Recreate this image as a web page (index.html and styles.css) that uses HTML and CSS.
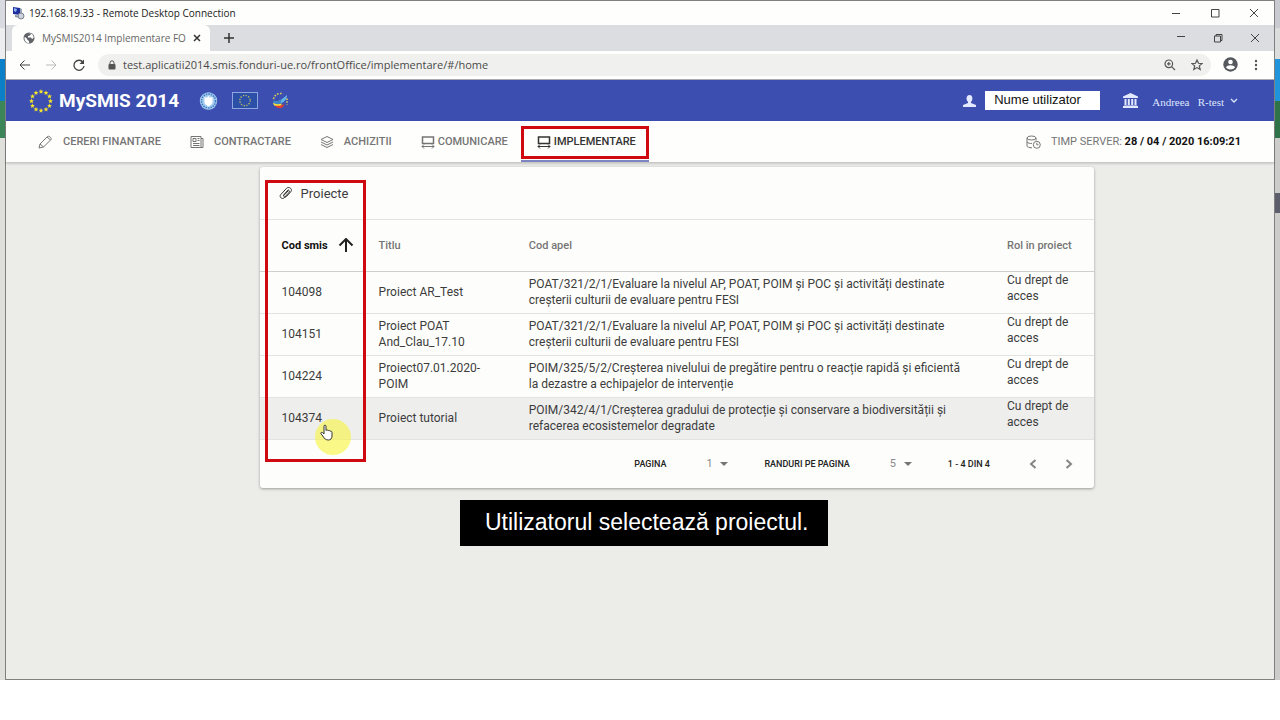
FILE: index.html
```html
<!DOCTYPE html>
<html lang="ro">
<head>
  <meta charset="UTF-8" />
  <meta name="viewport" content="width=device-width, initial-scale=1.0" />
  <title>MySMIS2014 Implementare FO</title>
  <link rel="stylesheet" href="styles.css">
</head>
<body>
  <div class="desktop">
    <div class="strip strip-left"></div>
    <div class="window">

      <!-- remote desktop title bar -->
      <div class="titlebar">
        <svg class="rdp-icon" width="13" height="14" viewBox="0 0 13 14">
          <path d="M1 1l7 1v7l-7-1z" fill="#1c2f9c"/>
          <path d="M2 2l3 1-1 3-2-1z" fill="#8fb4ee"/>
          <path d="M8 2l2 1v6l-2 0z" fill="#9aa3b5"/>
          <path d="M3 9l5 1v2l-5-1z" fill="#8a93a5"/>
          <circle cx="9" cy="10" r="3" fill="#cdd3dd" stroke="#79808c"/>
        </svg>
        <span class="titlebar-text">192.168.19.33 - Remote Desktop Connection</span>
        <div class="win-buttons">
          <button aria-label="Minimize"><svg width="10" height="10" viewBox="0 0 10 10"><path d="M1 5.500h8"/></svg></button>
          <button aria-label="Maximize"><svg width="10" height="10" viewBox="0 0 10 10"><path d="M1.500 1.500h7.500v7.500h-7.500z"/></svg></button>
          <button aria-label="Close"><svg width="10" height="10" viewBox="0 0 10 10"><path d="M1 1l8 8M9 1l-8 8"/></svg></button>
        </div>
      </div>

      <!-- browser tabs -->
      <div class="tabbar">
        <div class="tab">
          <svg width="12" height="12" viewBox="0 0 12 12">
            <circle cx="6" cy="6" r="5.500" fill="#5f6368"/>
            <path d="M1.500 5l2 1 1 2 1.500 1v2C3.500 11 1.200 9 1.500 5zM5 1.500l3 .5-1 1.500-2 .5v1.500l3 0 1 1.500 1.500-1C11 3 9 1 5 1.500z" fill="#fff"/>
          </svg>
          <span class="tab-title">MySMIS2014 Implementare FO</span>
          <button aria-label="Close tab"><svg width="8" height="8" viewBox="0 0 8 8"><path d="M1 1l6 6M7 1l-6 6" stroke="#333" stroke-width="1.500"/></svg></button>
        </div>
        <button class="new-tab" aria-label="New tab"><svg width="10" height="10" viewBox="0 0 10 10"><path d="M5 0v10M0 5h10" stroke="#333" stroke-width="1.500"/></svg></button>
        <div class="win-buttons">
          <button aria-label="Minimize browser"><svg width="10" height="10" viewBox="0 0 10 10"><path d="M1 3.500h8"/></svg></button>
          <button aria-label="Restore browser"><svg width="10" height="10" viewBox="0 0 10 10"><path d="M1.500 3h6v6h-6zM3 3v-1.500h6v6h-1.500"/></svg></button>
          <button aria-label="Close browser"><svg width="10" height="10" viewBox="0 0 10 10"><path d="M1 1l8 8M9 1l-8 8"/></svg></button>
        </div>
      </div>

      <!-- address bar -->
      <div class="toolbar">
        <button aria-label="Back"><svg width="11" height="10" viewBox="0 0 11 10"><path d="M11 5H1M5.500 .5L1 5l4.500 4.500" stroke="#444"/></svg></button>
        <button aria-label="Forward"><svg width="11" height="10" viewBox="0 0 11 10"><path d="M0 5h10M5.500 .5L10 5l-4.500 4.500" stroke="#bbb"/></svg></button>
        <button aria-label="Reload"><svg width="12" height="12" viewBox="0 0 12 12"><path d="M10 3.200A5 5 0 1 0 11 7" stroke="#444" stroke-width="1.300"/><path d="M11 .5v4.500H6.500z" fill="#444"/></svg></button>
        <div class="address">
          <svg width="8" height="10" viewBox="0 0 8 10"><rect x=".5" y="4" width="7" height="5.500" rx="1" fill="#555"/><path d="M2 4V2.800a2 2 0 0 1 4 0V4" stroke="#555"/></svg>
          <input type="text" aria-label="Address" value="test.aplicatii2014.smis.fonduri-ue.ro/frontOffice/implementare/#/home">
          <button aria-label="Zoom"><svg width="12" height="12" viewBox="0 0 12 12"><circle cx="4.800" cy="4.800" r="3.800" stroke="#555" stroke-width="1.200"/><path d="M7.600 7.600L11 11M3 4.800h3.600M4.800 3v3.600" stroke="#555" stroke-width="1.200"/></svg></button>
          <button aria-label="Bookmark"><svg width="12" height="12" viewBox="0 0 12 12"><path d="M6 1l1.500 3.300 3.500.3-2.700 2.300.9 3.600L6 8.600l-3.200 1.900.9-3.600L1 4.600l3.500-.3z" stroke="#555" stroke-width="1.200"/></svg></button>
        </div>
        <button aria-label="Profile"><svg width="15" height="15" viewBox="0 0 15 15"><circle cx="7.500" cy="7.500" r="7.200" fill="#55585c"/><circle cx="7.500" cy="5" r="2.300" fill="#fff"/><path d="M3 10.500c1-3 8-3 9 0-2 2.500-7 2.500-9 0z" fill="#fff"/></svg></button>
        <button aria-label="Menu"><svg class="dots" width="4" height="12" viewBox="0 0 4 12"><circle cx="2" cy="2" r="1.200"/><circle cx="2" cy="6" r="1.200"/><circle cx="2" cy="10" r="1.200"/></svg></button>
      </div>

      <header class="app-header">
        <a class="brand" href="#">
          <svg class="stars" width="24" height="24" viewBox="0 0 24 24">
            <defs><path id="star" d="M0-2.400L.7-.8 2.400-.7 1.100 .4 1.500 2.200 0 1.300-1.500 2.200-1.100 .4-2.400-.7-.7-.8z"/></defs>
            <use href="#star" x="12" y="2.500"/><use href="#star" x="17" y="3.800"/><use href="#star" x="20.500" y="7.300"/>
            <use href="#star" x="21.500" y="12"/><use href="#star" x="20.500" y="16.800"/><use href="#star" x="17" y="20.300"/>
            <use href="#star" x="12" y="21.500"/><use href="#star" x="7" y="20.300"/><use href="#star" x="3.500" y="16.800"/>
            <use href="#star" x="2.500" y="12"/><use href="#star" x="3.500" y="7.300"/><use href="#star" x="7" y="3.800"/>
          </svg>
          <span>MySMIS 2014</span>
        </a>
        <svg class="gov-logo" width="19" height="18" viewBox="0 0 19 18">
          <circle cx="9.500" cy="9" r="8.700" fill="#a9cdf0"/>
          <circle cx="9.500" cy="9" r="7" fill="none" stroke="#3d7fc4" stroke-width="1.600" stroke-dasharray="1.500 1"/>
          <path d="M5.500 5l2.500.8L9.500 4l1.500 1.800 2.500-.8v5c0 2-2 3-4 4.500-2-1.500-4-2.500-4-4.500z" fill="#fff"/>
        </svg>
        <svg class="eu-logo" width="26" height="17" viewBox="0 0 26 17">
          <rect x=".5" y=".5" width="25" height="16" fill="#2c50a8" stroke="#8ea5e0"/>
          <circle cx="13" cy="8.500" r="5.200" fill="none" stroke="#b5b565" stroke-width="1.400" stroke-dasharray="1.300 1.420"/>
        </svg>
        <svg class="fund-logo" width="17" height="17" viewBox="0 0 17 17">
          <path d="M1.500 7A7 7 0 0 1 11 2" stroke="#d9d255" stroke-width="1.600" stroke-dasharray="1.600 1.400"/>
          <path d="M1.500 8.500c5 2 8-1 13.500-5.500 0 5-3.500 8-8 8.500-3 .3-5-1-5.500-3z" fill="#62b5ea"/>
          <path d="M1.500 8.500c3 1.500 6 .5 8-1l-1 4-6.500 2C1.500 12 1.200 10 1.500 8.500z" fill="#3f86c9"/>
          <path d="M1 10.500c2 1.800 5 2.300 9 1l-1 2.500H3C2 13 1.200 12 1 10.500z" fill="#f5e33a"/>
          <path d="M3 13.500c3 .6 7 .2 9.500-1.500-.5 2.500-2.500 4.300-5 4.300-1.800 0-3.500-1-4.500-2.800z" fill="#df3b35"/>
          <path d="M15 6.500v6" stroke="#d9d255" stroke-width="1.600" stroke-dasharray="1.500 1.200"/>
        </svg>
        <div class="account">
          <svg class="solid" width="13" height="12" viewBox="0 0 13 12"><ellipse cx="6.500" cy="3.600" rx="2.900" ry="3.500"/><path d="M5 6h3v2l5 2v2H0v-2l5-2z"/></svg>
          <span class="user-label">Nume utilizator</span>
          <svg class="bank solid" width="15" height="15" viewBox="0 0 15 15"><path d="M7.500 0L15 3.500V5H0V3.500zM1.500 6h2v6h-2zM4.800 6h2v6h-2zM8.200 6h2v6h-2zM11.500 6h2v6h-2zM1 12.500h13V13H15v2H0v-2h1z"/></svg>
          <button class="user-menu">Andreea&nbsp;&nbsp; R-test
            <svg width="8" height="10" viewBox="0 0 8 10"><path d="M1 2l3 3 3-3" stroke="#dfe6ff" stroke-width="1.300"/></svg>
          </button>
        </div>
      </header>

      <nav class="app-nav">
        <a class="nav-wide" href="#">
          <svg width="15" height="14" viewBox="0 0 15 14"><path d="M1 13l1-4L9.500 1.500C10.500.5 14 2.500 13 4.500L5.500 12zM2 9l3.500 3M9 2l3.500 3"/></svg>
          CERERI FINANTARE
        </a>
        <a class="nav-wide" href="#">
          <svg width="14" height="14" viewBox="0 0 14 14"><path d="M1 1.500h10v11H1zM11 3.500h2v9h-2M3 3.500h3v3H3zM7.500 3.500h2M7.500 5.500h2M3 8.500h6.500M3 10.500h6.500"/></svg>
          CONTRACTARE
        </a>
        <a class="nav-wide" href="#">
          <svg width="14" height="14" viewBox="0 0 14 14"><path d="M7 1.500l6 3-6 3-6-3zM1 7l6 3 6-3M1 9.500l6 3 6-3"/></svg>
          ACHIZITII
        </a>
        <a class="nav-narrow" href="#">
          <svg width="14" height="14" viewBox="0 0 14 14"><path d="M1.500 2h11v6.500h-11z" stroke-width="1.500"/><path d="M1 11.500h12M3 9.500l-2 2 2 2M11 9.500l2 2-2 2"/></svg>
          COMUNICARE
        </a>
        <a class="nav-narrow active" href="#">
          <svg width="14" height="14" viewBox="0 0 14 14"><path d="M1.500 2h11v6.500h-11z" stroke-width="1.500"/><path d="M1 11.500h12M3 9.500l-2 2 2 2M11 9.500l2 2-2 2"/></svg>
          IMPLEMENTARE
        </a>
        <div class="server-time">
          <svg width="15" height="14" viewBox="0 0 15 14"><ellipse cx="5.500" cy="3" rx="4.500" ry="2"/><path d="M1 3v8c0 1 2 1.800 5 1.800M10 3v2.500M1 7c1 1.300 3 1.500 5 1.400"/><circle cx="10.800" cy="9.800" r="3.500"/><path d="M10.800 7.800v2h1.700"/></svg>
          <span>TIMP SERVER: <b>28 / 04 / 2020 16:09:21</b></span>
        </div>
      </nav>

      <main>
        <section class="card">
          <h1>
            <svg width="14" height="14" viewBox="0 0 14 14"><path d="M4.500 9.800L9 5c1-1 2.200.1 1.300 1.100l-5.100 5.700C3.300 13.800-.2 11 1.700 8.700L7.500 2.300c2.300-2.300 6.500.7 4.400 3.300"/><path d="M11.900 5.600L7.500 10.500c-1.500 1.700-4-.3-2.500-2L9.500 3.500"/></svg>
            Proiecte
          </h1>
          <table>
            <thead>
              <tr>
                <th class="col-cod sorted"><span>Cod smis <svg width="16" height="14" viewBox="0 0 16 14"><path d="M8 14V1M1.500 7.500L8 1l6.500 6.500"/></svg></span></th>
                <th class="col-titlu">Titlu</th>
                <th class="col-apel">Cod apel</th>
                <th class="col-rol">Rol în proiect</th>
              </tr>
            </thead>
            <tbody>
              <tr>
                <td>104098</td>
                <td>Proiect AR_Test</td>
                <td>POAT/321/2/1/Evaluare la nivelul AP, POAT, POIM și POC și activități destinate creșterii culturii de evaluare pentru FESI</td>
                <td>Cu drept de acces</td>
              </tr>
              <tr>
                <td>104151</td>
                <td>Proiect POAT And_Clau_17.10</td>
                <td>POAT/321/2/1/Evaluare la nivelul AP, POAT, POIM și POC și activități destinate creșterii culturii de evaluare pentru FESI</td>
                <td>Cu drept de acces</td>
              </tr>
              <tr>
                <td>104224</td>
                <td>Proiect07.01.2020-POIM</td>
                <td>POIM/325/5/2/Creșterea nivelului de pregătire pentru o reacție rapidă și eficientă la dezastre a echipajelor de intervenție</td>
                <td>Cu drept de acces</td>
              </tr>
              <tr class="hovered">
                <td>104374</td>
                <td>Proiect tutorial</td>
                <td>POIM/342/4/1/Creșterea gradului de protecție și conservare a biodiversității și refacerea ecosistemelor degradate</td>
                <td>Cu drept de acces</td>
              </tr>
            </tbody>
          </table>
          <div class="pagination">
            <label for="page">PAGINA</label>
            <span class="select-wrap"><select id="page"><option>1</option></select></span>
            <label for="rows">RANDURI PE PAGINA</label>
            <span class="select-wrap"><select id="rows"><option>5</option></select></span>
            <span class="range">1 - 4 DIN 4</span>
            <button aria-label="Previous page"><svg width="8" height="10" viewBox="0 0 8 10"><path d="M6.500 1l-4.500 4 4.500 4"/></svg></button>
            <button aria-label="Next page"><svg width="8" height="10" viewBox="0 0 8 10"><path d="M1.500 1l4.500 4-4.500 4"/></svg></button>
          </div>
          <div class="spotlight"></div>
          <div class="column-mark"></div>
          <svg class="pointer" width="14" height="17" viewBox="0 0 14 17"><path d="M4 10V2.200c0-1.500 2-1.500 2 0V6.500c.5-.9 2-.7 2.200.3.600-.7 1.800-.4 2 .5.800-.4 1.800 0 1.800 1V12c0 2.500-1.500 4-3.500 4C5.500 16 4.500 14.500 3.500 13L1 9.700c-.6-1 .6-1.900 1.500-1.200z" fill="#fff" stroke="#333"/></svg>
        </section>
        <p class="caption">Utilizatorul selectează proiectul.</p>
      </main>
    </div>
    <div class="strip strip-right"></div>
  </div>
</body>
</html>
```
FILE: styles.css
```css
* {
  box-sizing: border-box;
}

body {
  margin: 0;
  background: #fff;
  font-family: Roboto, sans-serif;
  color: #3c3c3c;
}

svg {
  display: block;
  flex: none;
  fill: none;
}

button {
  display: flex;
  align-items: center;
  justify-content: center;
  padding: 0;
  border: none;
  background: none;
  cursor: pointer;
}

.desktop {
  display: flex;
  min-height: calc(100vh - 40px);
}

.strip {
  width: 5px;
}

.strip-left {
  background: linear-gradient(#d9dbe0 28px, #eceef0 28px 59px, #0b80c8 59px 101px, #3b8558 101px 138px, #dfe0db 138px);
}

.strip-right {
  background: linear-gradient(#c9cbd0 28px, #dcdede 28px 59px, #2095dc 59px 101px, #2f7448 101px 138px, #cccdca 138px 193px, #5c5f6b 193px 213px, #cccdca 213px);
}

.window {
  display: flex;
  flex-direction: column;
  flex: 1;
  border: 1px solid #808080;
  background: #ecede9;
}

/* remote desktop frame */
.titlebar {
  display: flex;
  align-items: center;
  gap: 4px;
  height: 24px;
  padding-left: 6px;
  background: #fefefc;
  font-family: "Open Sans", sans-serif;
  font-size: 10px;
  color: #222;
}

.win-buttons {
  display: flex;
  gap: 29px;
  margin-left: auto;
  padding-right: 15px;
}

.win-buttons path {
  stroke: #444;
}

/* browser */
.tabbar {
  display: flex;
  align-items: center;
  height: 26px;
  padding-left: 6px;
  background: #dcdde1;
}

.tab {
  display: flex;
  align-items: center;
  gap: 7px;
  align-self: stretch;
  padding: 0 9px 0 11px;
  border-radius: 6px 6px 0 0;
  background: #fefefc;
  font-family: "Open Sans", sans-serif;
  font-size: 10px;
  color: #666;
}

.tab-title {
  width: 144px;
  white-space: nowrap;
}

.new-tab {
  margin-left: 14px;
}

.tabbar .win-buttons {
  gap: 27px;
  padding-right: 14px;
}

.toolbar {
  display: flex;
  align-items: center;
  gap: 16px;
  height: 29px;
  padding: 0 16px 1px 13px;
  border-bottom: 1px solid #a9abb5;
  background: #fefefc;
}

.dots {
  fill: #555;
}

.address {
  display: flex;
  align-items: center;
  flex: 1;
  gap: 15px;
  height: 22px;
  margin: 0 -4px 0 -3px;
  padding: 0 8px 0 10px;
  border-radius: 11px;
  background: #f0f1ee;
}

.address input {
  flex: 1;
  min-width: 0;
  margin-left: -8px;
  padding: 0;
  border: none;
  background: none;
  font-family: "Open Sans", sans-serif;
  font-size: 11px;
  color: #4a4a4a;
}

/* application header */
.app-header {
  display: flex;
  align-items: center;
  height: 41px;
  padding: 0 36px 0 23px;
  background: #3c4eb0;
}

.brand {
  display: flex;
  align-items: center;
  gap: 6px;
  font-size: 19px;
  font-weight: 700;
  color: #fff;
  text-decoration: none;
}

.stars {
  fill: #f4e52c;
}

.gov-logo {
  margin-left: 20px;
}

.eu-logo,
.fund-logo {
  margin-left: 14px;
}

.account {
  display: flex;
  align-items: center;
  margin-left: auto;
}

.solid {
  fill: #e3e9ff;
}

.user-label {
  width: 115px;
  height: 19px;
  margin-left: 9px;
  padding-left: 9px;
  background: #fff;
  font-family: "Liberation Sans", sans-serif;
  font-size: 13px;
  line-height: 18px;
  color: #111;
}

.bank {
  margin: 0 14px 0 23px;
}

.user-menu {
  gap: 6px;
  padding-top: 3px;
  font-family: "Liberation Serif", serif;
  font-size: 11px;
  color: #dfe6ff;
}

/* main menu */
.app-nav {
  display: flex;
  align-items: stretch;
  height: 42px;
  padding: 0 33px 0 16px;
  border-bottom: 1px solid #c9cac6;
  background: #fefefc;
  box-shadow: 0 1px 2px rgba(0, 0, 0, 0.15);
}

.app-nav a {
  position: relative;
  display: flex;
  align-items: center;
  gap: 10px;
  padding: 0 13px 0 16px;
  font-size: 11px;
  font-weight: 500;
  color: #757575;
  text-decoration: none;
}

.app-nav .nav-narrow {
  gap: 3px;
}

.app-nav svg {
  stroke: currentColor;
}

.app-nav .active {
  box-shadow: inset 0 -2px #7d86c0;
  color: #333;
}

.app-nav .active::after {
  content: "";
  position: absolute;
  inset: 5px 0 3px 0;
  border: 3px solid #d0080f;
}

.server-time {
  display: flex;
  align-items: center;
  gap: 10px;
  margin-left: auto;
  font-size: 11px;
  color: #757575;
}

.server-time b {
  font-weight: 700;
  color: #111;
}

main {
  position: relative;
  flex: 1;
  padding: 4px 180px 0 20%;
}

.card {
  position: relative;
  border-radius: 3px;
  background: #fdfefb;
  box-shadow: 0 1px 3px rgba(0, 0, 0, 0.35);
}

.card h1 {
  display: flex;
  align-items: center;
  gap: 8px;
  height: 53px;
  margin: 0;
  padding-left: 19px;
  border-bottom: 1px solid #e3e4e0;
  font-size: 13px;
  font-weight: 400;
}

.card h1 path {
  stroke: #333;
}

table {
  width: 100%;
  border-collapse: collapse;
  table-layout: fixed;
}

th,
td {
  padding: 0 40px 0 0;
  border-bottom: 1px solid #e3e4e0;
  text-align: left;
}

th {
  height: 51px;
  border-bottom-color: #cfd0cc;
  font-size: 11px;
  font-weight: 500;
  color: #757575;
}

td {
  height: 42px;
  font-size: 12px;
  line-height: 16px;
}

th:first-child,
td:first-child {
  padding: 0 0 0 22px;
}

th:last-child,
td:last-child {
  padding-right: 16px;
}

td:last-child {
  padding-bottom: 8px;
}

.card .sorted {
  font-weight: 700;
  color: #111;
}

.sorted span {
  display: flex;
  align-items: center;
  gap: 10px;
}

.sorted path {
  stroke: #222;
  stroke-width: 2;
}

.col-cod {
  width: 119px;
}

.col-titlu {
  width: 18%;
}

.col-rol {
  width: 87px;
}

.hovered {
  background: #eeeeed;
}

.pagination {
  display: flex;
  align-items: center;
  justify-content: flex-end;
  height: 48px;
  padding-right: 21px;
  font-size: 9px;
  font-weight: 500;
  color: #222;
}

.select-wrap {
  display: flex;
  align-items: center;
  margin: 0 36px 0 40px;
}

.select-wrap::after {
  content: "";
  margin-left: -8px;
  border: 4px solid transparent;
  border-top-color: #757575;
  border-bottom: none;
  pointer-events: none;
}

.pagination select {
  width: 22px;
  padding: 0;
  border: none;
  background: none;
  appearance: none;
  font-family: inherit;
  font-size: 11px;
  color: #888;
}

.pagination button {
  margin-left: 28px;
}

.range {
  margin-right: 11px;
}

.pagination path {
  stroke: #858585;
  stroke-width: 2;
}

/* tutorial overlay */
.column-mark {
  position: absolute;
  inset: 13px auto 26px 5px;
  width: 101px;
  border: 3px solid #d0080f;
}

.spotlight {
  position: absolute;
  left: 55px;
  bottom: 33px;
  width: 36px;
  height: 36px;
  border-radius: 50%;
  background: rgba(248, 245, 60, 0.6);
}

.pointer {
  position: absolute;
  left: 60px;
  bottom: 47px;
}

.caption {
  position: absolute;
  top: 337px;
  left: 454px;
  margin: 0;
  padding: 0 20px 2px 25px;
  background: #000;
  font-family: "Liberation Sans", sans-serif;
  font-size: 23px;
  line-height: 44px;
  color: #fff;
  white-space: nowrap;
}
```
